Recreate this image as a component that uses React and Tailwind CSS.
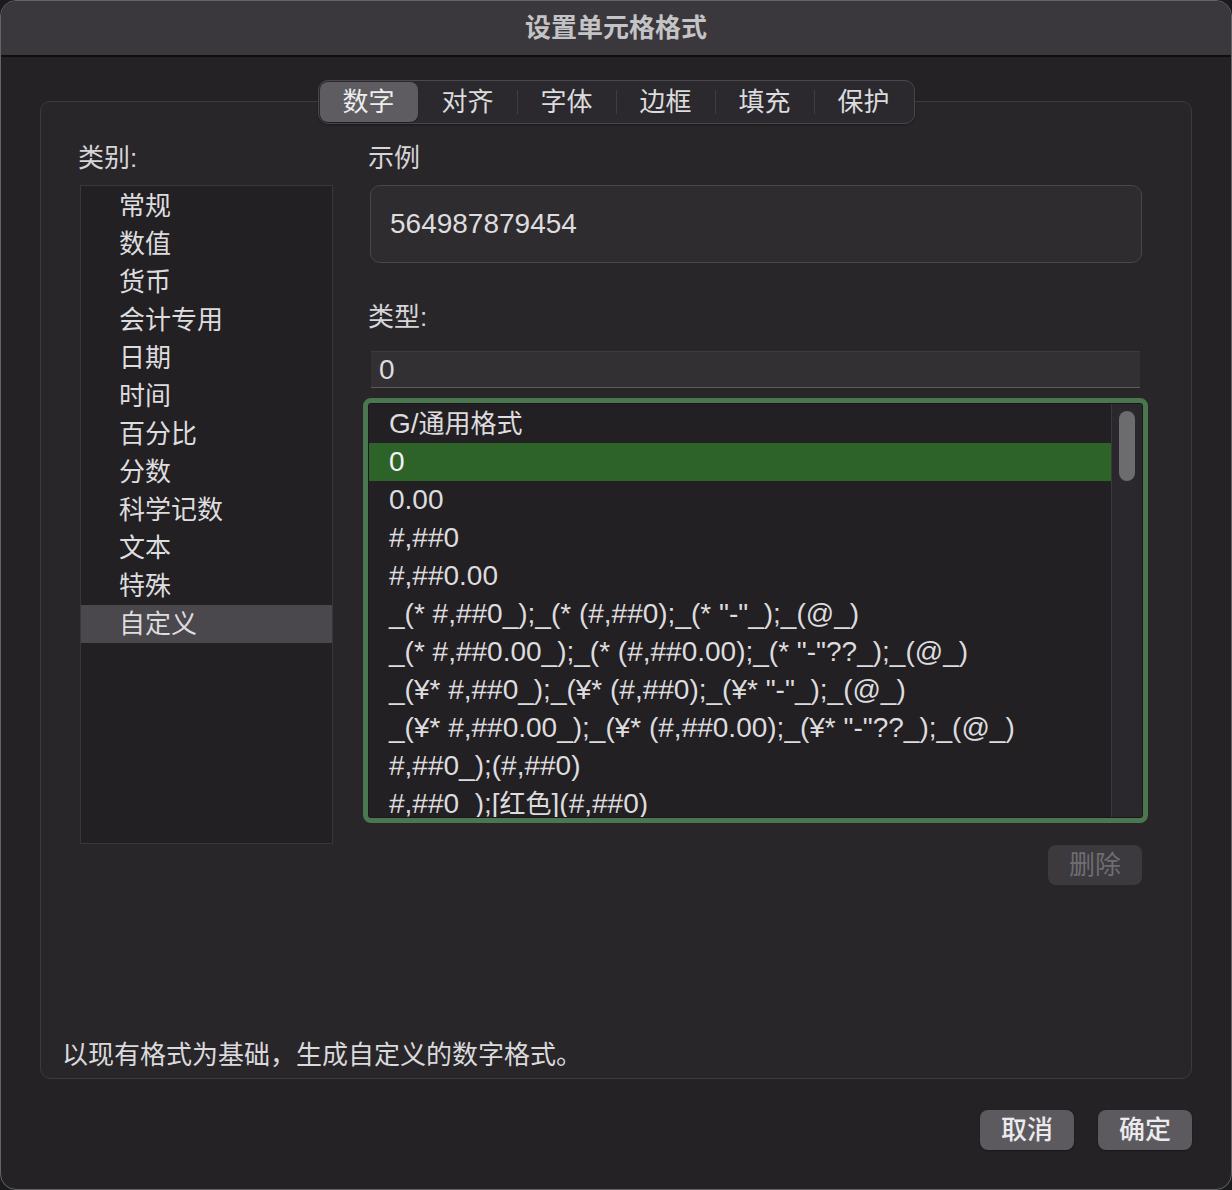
import React from 'react';

const categories = ['常规', '数值', '货币', '会计专用', '日期', '时间', '百分比', '分数', '科学记数', '文本', '特殊', '自定义'];

const formats = [
  'G/通用格式',
  '0',
  '0.00',
  '#,##0',
  '#,##0.00',
  '_(* #,##0_);_(* (#,##0);_(* "-"_);_(@_)',
  '_(* #,##0.00_);_(* (#,##0.00);_(* "-"??_);_(@_)',
  '_(¥* #,##0_);_(¥* (#,##0);_(¥* "-"_);_(@_)',
  '_(¥* #,##0.00_);_(¥* (#,##0.00);_(¥* "-"??_);_(@_)',
  '#,##0_);(#,##0)',
  '#,##0_);[红色](#,##0)',
  '#,##0.00_);(#,##0.00)',
  '#,##0.00_);[红色](#,##0.00)',
];

const tabs = ['数字', '对齐', '字体', '边框', '填充', '保护'];

// CJK glyphs sit a bit smaller than the latin ones in the original font
const FormatText = ({ text }) => (
  <>
    {text.split(/([\u4e00-\u9fff]+)/).map((part, i) =>
      /[\u4e00-\u9fff]/.test(part) ? (
        <span key={i} className="text-[26px]">{part}</span>
      ) : (
        <span key={i}>{part}</span>
      )
    )}
  </>
);

const App = () => {
  return (
    <div className="w-[1232px] h-[1190px] bg-[#1b1a1c] font-['Liberation_Sans','Noto_Sans_CJK_SC',sans-serif] text-[#dddcde]">
      <div className="w-full h-full rounded-[16px] border border-[#646366] bg-[#252226] overflow-hidden flex flex-col">
        {/* title bar */}
        <div className="h-[56px] shrink-0 bg-[#3a383c] border-b-2 border-[#0e0d0f] flex items-center justify-center">
          <span className="text-[26px] font-semibold text-[#c4c3c6] leading-none">设置单元格格式</span>
        </div>

        <div className="px-[39px] flex flex-col">
          {/* tabs */}
          <div className="flex justify-center mt-[23px] relative z-10">
            <div className="flex items-center h-[44px] px-px rounded-[10px] border border-[#4a484c] bg-[#2b292d] shadow-[0_1px_2px_rgba(0,0,0,0.4)]">
              {tabs.map((t, i) => (
                <React.Fragment key={t}>
                  {i > 0 && (
                    <div className={`w-px h-[24px] ${i > 1 ? 'bg-[#3f3d41]' : 'bg-transparent'}`} />
                  )}
                  <div
                    className={`w-[98px] h-[40px] flex items-center justify-center text-[26px] leading-none ${
                      i === 0 ? 'bg-[#5e5c60] rounded-[8px] text-[#ececee] shadow-[0_1px_1px_rgba(0,0,0,0.3)]' : 'text-[#dcdbdd]'
                    }`}
                  >
                    {t}
                  </div>
                </React.Fragment>
              ))}
            </div>
          </div>

          {/* group box */}
          <div className="-mt-[23px] h-[978px] rounded-[10px] border border-[#3c3a3e] bg-[#29262a] px-[39px] pt-[42px] flex flex-col">
            <div className="flex gap-[30px]">
              {/* category column */}
              <div className="w-[253px] shrink-0 flex flex-col">
                <div className="h-[28px] leading-[28px] text-[26px] -ml-[2px] text-[#d6d5d8]">类别:</div>
                <div className="mt-[13px] h-[659px] border border-[#39373b] bg-[#232024] pt-px">
                  {categories.map((c) => (
                    <div
                      key={c}
                      className={`h-[38px] flex items-center pl-[38px] text-[26px] leading-none ${
                        c === '自定义' ? 'bg-[#4a484c]' : ''
                      }`}
                    >
                      {c}
                    </div>
                  ))}
                </div>
              </div>

              {/* format column */}
              <div className="w-[785px] shrink-0 flex flex-col">
                <div className="h-[28px] leading-[28px] text-[26px] ml-[5px] text-[#d6d5d8]">示例</div>
                <div className="mt-[13px] ml-[7px] w-[772px] h-[78px] rounded-[10px] border border-[#48464a] bg-[#2f2c30] flex items-center pl-[19px] text-[28px] leading-none">
                  564987879454
                </div>

                <div className="mt-[40px] h-[28px] leading-[28px] text-[26px] ml-[5px] text-[#d6d5d8]">类型:</div>
                <div className="mt-[20px] ml-[8px] w-[769px] h-[37px] bg-[#333034] border-t border-[#3d3b3f] border-b border-b-[#5e5c60] flex items-center pl-[8px] text-[28px] leading-none">
                  0
                </div>

                <div className="mt-[10px] h-[425px] rounded-[8px] border-[5px] border-[#4b7750] bg-[#1a181c] p-px flex">
                  <div className="flex-1 bg-[#232024] overflow-hidden pt-[1px]">
                    {formats.map((f, i) => (
                      <div
                        key={f}
                        className={`h-[38px] flex items-center pl-[20px] text-[28px] leading-none whitespace-nowrap ${
                          i === 1 ? 'bg-[#2d6229] text-[#f2f2f3]' : ''
                        }`}
                      >
                        <FormatText text={f} />
                      </div>
                    ))}
                  </div>
                  <div className="w-[31px] shrink-0 bg-[#2a282c] border-l border-[#3a383c] pt-[7px] flex justify-center">
                    <div className="w-[16px] h-[70px] rounded-full bg-[#6c6b6e]" />
                  </div>
                </div>

                <div className="mt-[22px] mr-[6px] flex justify-end">
                  <div className="w-[94px] h-[40px] rounded-[8px] bg-[#3c3a3e] flex items-center justify-center text-[26px] leading-none text-[#6f6d71]">
                    删除
                  </div>
                </div>
              </div>
            </div>

            <div className="mt-auto mb-[9px] -ml-[18px] h-[28px] leading-[28px] text-[26px] text-[#dad9db]">
              以现有格式为基础，生成自定义的数字格式。
            </div>
          </div>

          {/* dialog buttons */}
          <div className="mt-[31px] flex justify-end gap-[24px]">
            <div className="w-[94px] h-[40px] rounded-[8px] bg-[#5c5a5e] shadow-[0_1px_2px_rgba(0,0,0,0.4)] flex items-center justify-center text-[26px] font-medium leading-none text-[#ebeaec]">
              取消
            </div>
            <div className="w-[94px] h-[40px] rounded-[8px] bg-[#5c5a5e] shadow-[0_1px_2px_rgba(0,0,0,0.4)] flex items-center justify-center text-[26px] font-medium leading-none text-[#ebeaec]">
              确定
            </div>
          </div>
        </div>
      </div>
    </div>
  );
};

export default App;
